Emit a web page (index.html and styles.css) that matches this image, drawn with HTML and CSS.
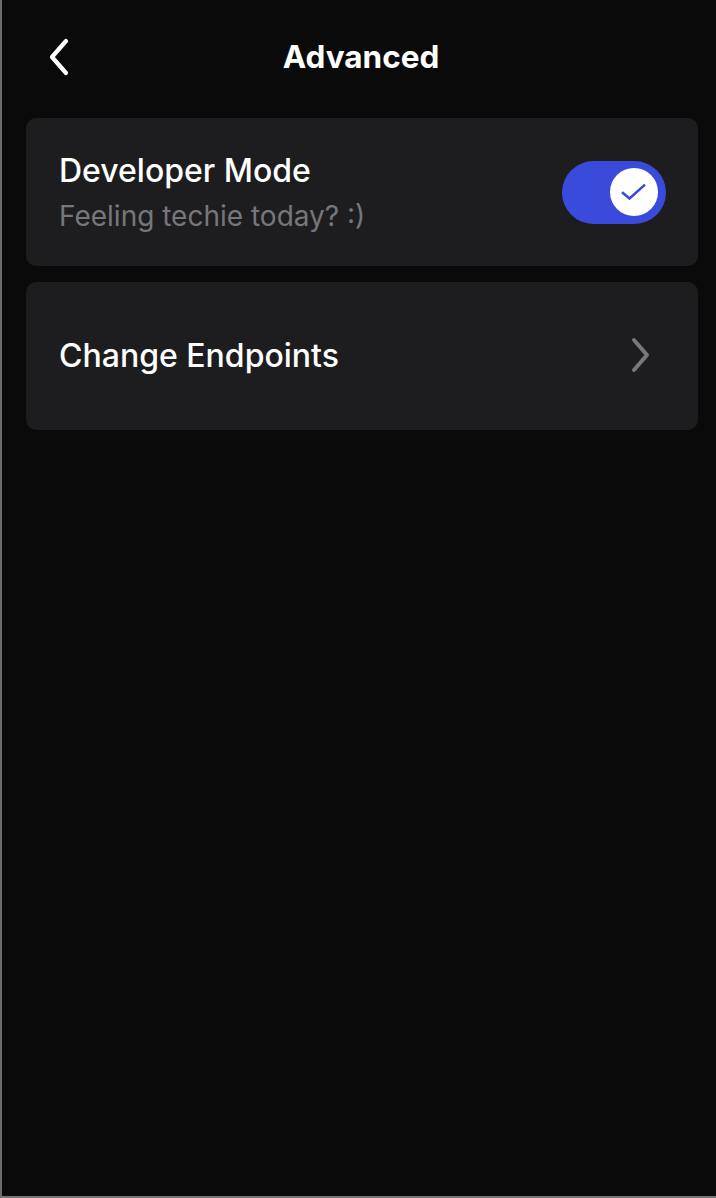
FILE: index.html
```html
<!DOCTYPE html>
<html lang="en">
<head>
<meta charset="utf-8">
<title>Advanced</title>
<link rel="stylesheet" href="styles.css">
</head>
<body>
<div class="screen">
  <header class="topbar">
    <button class="back" aria-label="Back">
      <svg width="24" height="38" viewBox="0 0 24 38"><path d="M19 3 L5 19 L19 35" fill="none" stroke="#fff" stroke-width="4.2" stroke-linecap="round" stroke-linejoin="round"/></svg>
    </button>
    <h1 class="title">Advanced</h1>
  </header>
  <main class="list">
    <section class="card">
      <div class="text">
        <div class="label">Developer Mode</div>
        <div class="sub">Feeling techie today? :)</div>
      </div>
      <div class="toggle on">
        <div class="knob">
          <svg width="26" height="20" viewBox="0 0 26 20"><path d="M2 11 L8.5 16.5 L23 3.5" fill="none" stroke="#3a4bdc" stroke-width="2.6" stroke-linecap="square"/></svg>
        </div>
      </div>
    </section>
    <section class="card">
      <div class="text">
        <div class="label">Change Endpoints</div>
      </div>
      <svg class="chev" width="22" height="36" viewBox="0 0 22 36"><path d="M4 3 L17 18 L4 33" fill="none" stroke="#78787c" stroke-width="4" stroke-linecap="round" stroke-linejoin="round"/></svg>
    </section>
  </main>
</div>
</body>
</html>
```

FILE: styles.css
```css
html, body {
  margin: 0;
  padding: 0;
  height: 100%;
  background: #0a0a0a;
}
body {
  font-family: Inter, "Noto Sans", sans-serif;
  color: #fff;
}
.screen {
  box-sizing: border-box;
  height: 1198px;
  border-left: 2px solid #6c6c6c;
  border-bottom: 2px solid #777;
  background: #0a0a0a;
  padding: 0 18px 0 24px;
}
.topbar {
  position: relative;
  height: 118px;
  display: flex;
  align-items: center;
  justify-content: center;
}
.back {
  position: absolute;
  left: 21px;
  top: 38px;
  background: none;
  border: 0;
  padding: 0;
  width: 24px;
  height: 38px;
  display: flex;
}
.title {
  margin: 0 0 4px 0;
  font-size: 31.5px;
  font-weight: 700;
  transform: translateX(-1px);
  line-height: 1;
}
.list {
  display: flex;
  flex-direction: column;
  gap: 16px;
}
.card {
  background: #1d1d1f;
  border-radius: 10px;
  height: 148px;
  box-sizing: border-box;
  padding: 0 32px 0 33px;
  display: flex;
  align-items: center;
  justify-content: space-between;
}
.text {
  display: flex;
  flex-direction: column;
  gap: 10px;
}
.label {
  font-size: 32px;
  font-weight: 500;
  line-height: 38px;
}
.sub {
  font-size: 28px;
  color: #77777b;
  line-height: 32px;
}
.toggle {
  width: 104px;
  height: 63px;
  border-radius: 32px;
  background: #3a4bdc;
  box-sizing: border-box;
  padding: 7.5px 8px;
  display: flex;
  justify-content: flex-end;
}
.knob {
  width: 48px;
  height: 48px;
  border-radius: 50%;
  background: #fff;
  display: flex;
  align-items: center;
  justify-content: center;
}
.chev {
  margin-right: 14px;
  margin-bottom: 2px;
}
```
